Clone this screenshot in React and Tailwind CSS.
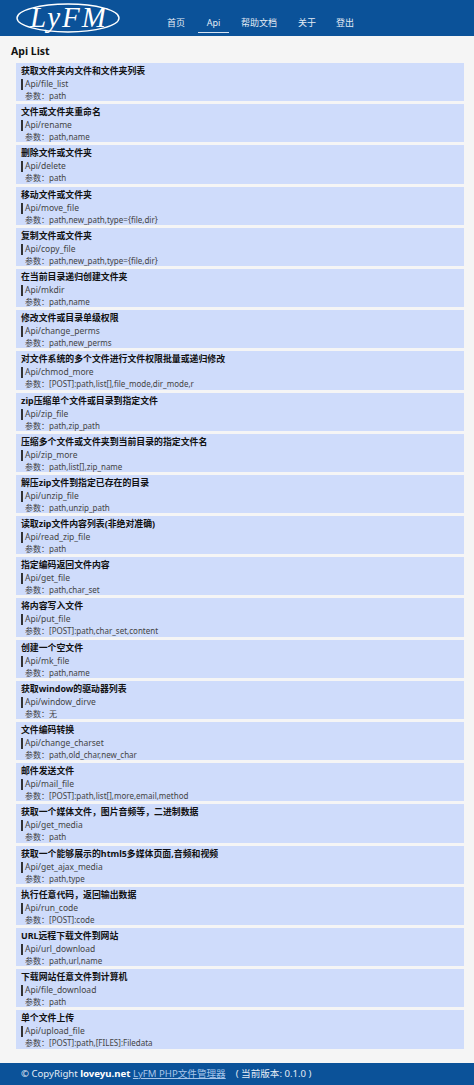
const apis = [
  ['获取文件夹内文件和文件夹列表', 'Api/file_list', 'path'],
  ['文件或文件夹重命名', 'Api/rename', 'path,name'],
  ['删除文件或文件夹', 'Api/delete', 'path'],
  ['移动文件或文件夹', 'Api/move_file', 'path,new_path,type={file,dir}'],
  ['复制文件或文件夹', 'Api/copy_file', 'path,new_path,type={file,dir}'],
  ['在当前目录递归创建文件夹', 'Api/mkdir', 'path,name'],
  ['修改文件或目录单级权限', 'Api/change_perms', 'path,new_perms'],
  ['对文件系统的多个文件进行文件权限批量或递归修改', 'Api/chmod_more', '[POST]:path,list[],file_mode,dir_mode,r'],
  ['zip压缩单个文件或目录到指定文件', 'Api/zip_file', 'path,zip_path'],
  ['压缩多个文件或文件夹到当前目录的指定文件名', 'Api/zip_more', 'path,list[],zip_name'],
  ['解压zip文件到指定已存在的目录', 'Api/unzip_file', 'path,unzip_path'],
  ['读取zip文件内容列表(非绝对准确)', 'Api/read_zip_file', 'path'],
  ['指定编码返回文件内容', 'Api/get_file', 'path,char_set'],
  ['将内容写入文件', 'Api/put_file', '[POST]:path,char_set,content'],
  ['创建一个空文件', 'Api/mk_file', 'path,name'],
  ['获取window的驱动器列表', 'Api/window_dirve', '无'],
  ['文件编码转换', 'Api/change_charset', 'path,old_char,new_char'],
  ['邮件发送文件', 'Api/mail_file', '[POST]:path,list[],more,email,method'],
  ['获取一个媒体文件，图片音频等，二进制数据', 'Api/get_media', 'path'],
  ['获取一个能够展示的html5多媒体页面,音频和视频', 'Api/get_ajax_media', 'path,type'],
  ['执行任意代码，返回输出数据', 'Api/run_code', '[POST]:code'],
  ['URL远程下载文件到网站', 'Api/url_download', 'path,url,name'],
  ['下载网站任意文件到计算机', 'Api/file_download', 'path'],
  ['单个文件上传', 'Api/upload_file', '[POST]:path,[FILES]:Filedata'],
]

function Logo() {
  return (
    <svg width="106" height="31" viewBox="0 0 106 31" className="ml-[16px] mt-[2px] shrink-0">
      <ellipse cx="52" cy="16" rx="51" ry="14" fill="none" stroke="#fff" strokeWidth="1.4" />
      <text x="52" y="25" textAnchor="middle" fill="#fff" fontSize="29" fontStyle="italic" textLength="76" fontFamily="'Liberation Serif', serif">LyFM</text>
    </svg>
  )
}

export default function App() {
  return (
    <div className="h-[1085px] flex flex-col bg-[#f5f5f5] text-[#333] font-['Noto_Sans','Noto_Sans_CJK_SC',sans-serif]">
      <header className="h-[36px] shrink-0 bg-[#0b5299] flex">
        <Logo />
        <nav className="flex ml-[45px] text-[9px] text-[#e4ecf5]">
          <a className="h-[33px] pt-[16px] leading-[14px]">首页</a>
          <a className="h-[33px] pt-[16px] leading-[14px] ml-[13px] w-[31px] text-center border-b-[1.5px] border-[#d7e3f2]">Api</a>
          <a className="h-[33px] pt-[16px] leading-[14px] ml-[12px]">帮助文档</a>
          <a className="h-[33px] pt-[16px] leading-[14px] ml-[21px]">关于</a>
          <a className="h-[33px] pt-[16px] leading-[14px] ml-[20px]">登出</a>
        </nav>
      </header>
      <main className="flex-1 pl-[16px] pr-[10px]">
        <h1 className="-ml-[5px] pt-[8px] h-[27px] text-[10.5px] leading-[15px] font-bold text-[#111]">Api List</h1>
        <div className="flex flex-col gap-[3px]">
          {apis.map(a => (
            <div key={a[1]} className="h-[38.2px] bg-[#cfdcfb] pl-[5px]">
              <div className="h-[16px] pt-[1px] leading-[14px] text-[8.9px] font-bold text-[#111] whitespace-nowrap">{a[0]}</div>
              <div className="h-[11px] leading-[10px] text-[8.5px] border-l-[2px] border-[#333] pl-[2px] text-[#444]">{a[1]}</div>
              <div className="h-[11px] leading-[12px] pl-[4px] text-[8px] text-[#444] whitespace-nowrap">参数：{a[2]}</div>
            </div>
          ))}
        </div>
      </main>
      <footer className="h-[22px] shrink-0 bg-[#0b5299] text-[#e4ecf5] pl-[21px] text-[9.6px] leading-[22px] whitespace-nowrap">
        © CopyRight <b className="text-white">loveyu.net</b> <a className="underline text-[#a9c6ea]">LyFM PHP文件管理器</a>
        <span className="ml-[10px]">( 当前版本: 0.1.0 )</span>
      </footer>
    </div>
  )
}
